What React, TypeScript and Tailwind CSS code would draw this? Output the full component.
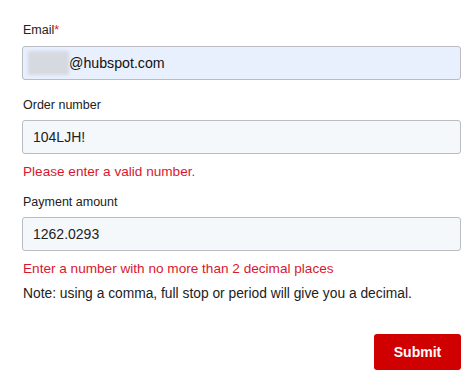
import React from "react";

export default function App() {
  return (
    <div
      className="w-[474px] h-[391px] bg-white text-[#222] relative"
      style={{ fontFamily: '"Liberation Sans", Arial, sans-serif' }}
    >
      <div className="pl-[22px] pr-[13px] pt-[22px]">
        <div className="text-[12.5px] leading-[16px] pl-[1px]">
          Email<span className="text-[#d9182e]">*</span>
        </div>
        <div className="mt-[8px] h-[34px] w-[439px] rounded-[3px] border border-[#b9bcc2] bg-[#e8f0fe] flex items-center pl-[5px]">
          <div className="w-[41px] h-[24px] bg-[#d6d9df] blur-[1.5px] rounded-[2px]" />
          <span className="text-[14.2px] leading-[18px] text-[#111]">@hubspot.com</span>
        </div>

        <div className="mt-[17px] text-[12.5px] leading-[16px] pl-[1px]">Order number</div>
        <div className="mt-[7px] h-[34px] w-[439px] rounded-[3px] border border-[#b9bcc2] bg-[#f5f8fa] flex items-center pl-[10px]">
          <span className="text-[14px] leading-[18px] text-[#222]">104LJH!</span>
        </div>
        <div className="mt-[9px] text-[13.6px] leading-[17px] text-[#d9182e] pl-[1px]">
          Please enter a valid number.
        </div>

        <div className="mt-[14px] text-[12.5px] leading-[16px] pl-[1px]">Payment amount</div>
        <div className="mt-[7px] h-[34px] w-[439px] rounded-[3px] border border-[#b9bcc2] bg-[#f5f8fa] flex items-center pl-[10px]">
          <span className="text-[14px] leading-[18px] text-[#222]">1262.0293</span>
        </div>
        <div className="mt-[9px] text-[13.6px] leading-[17px] text-[#d9182e] pl-[1px]">
          Enter a number with no more than 2 decimal places
        </div>
        <div className="mt-[8px] text-[13.8px] leading-[17px] text-[#222] pl-[1px]">
          Note: using a comma, full stop or period will give you a decimal.
        </div>

        <div className="mt-[32px] w-[439px] flex justify-end">
          <button className="w-[87px] h-[36px] rounded-[3px] bg-[#d10000] text-white font-bold text-[14px] leading-[17px]">
            Submit
          </button>
        </div>
      </div>
    </div>
  );
}
